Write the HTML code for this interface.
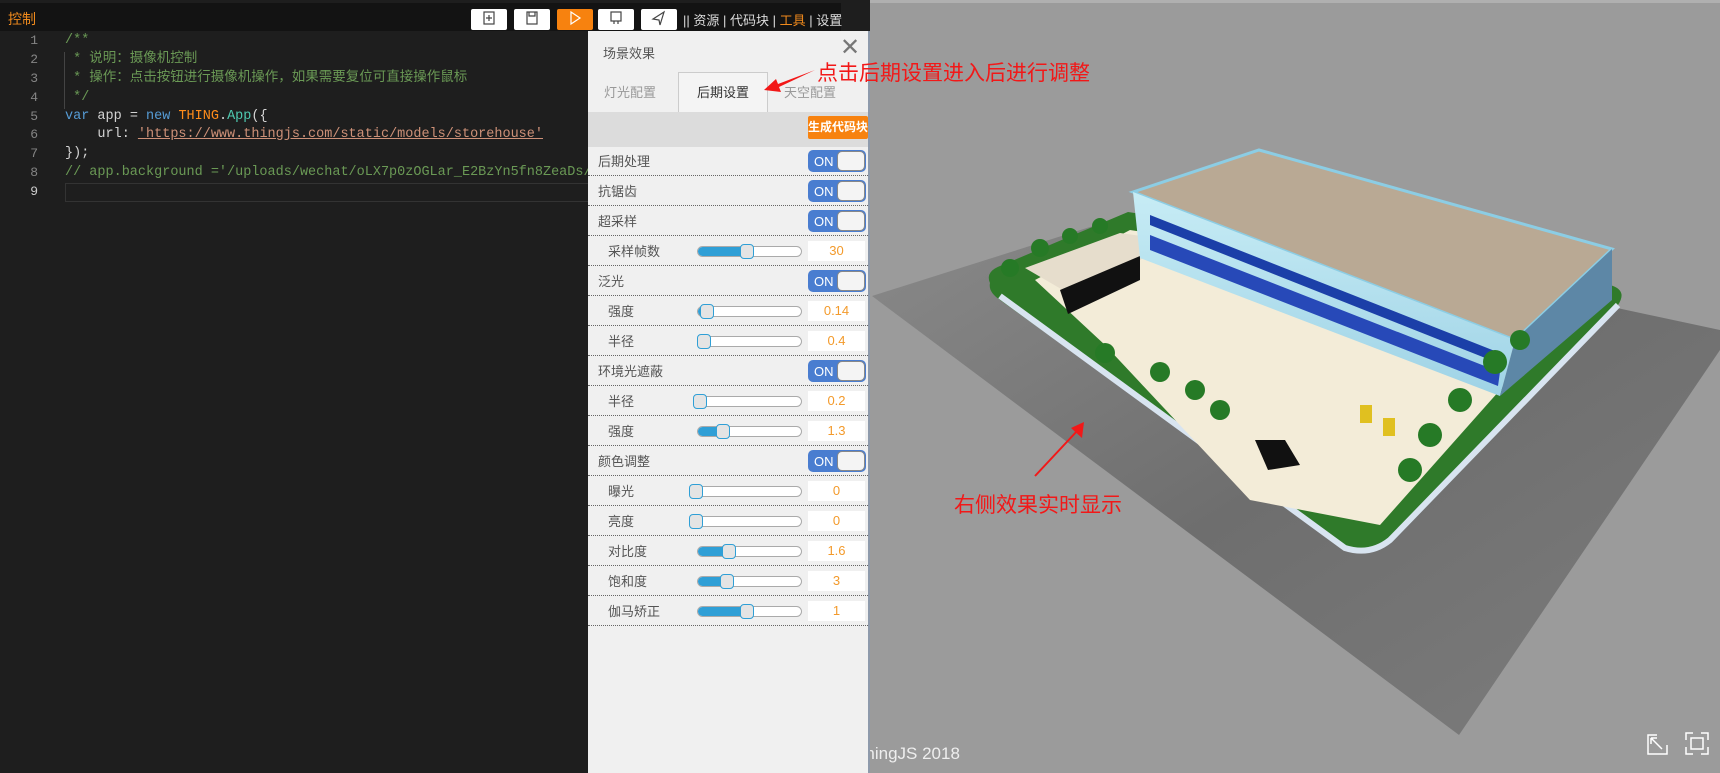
<!DOCTYPE html>
<html><head><meta charset="utf-8">
<style>
*{margin:0;padding:0;box-sizing:border-box}
body{width:1720px;height:773px;overflow:hidden;background:#9a9a9a;font-family:"Liberation Sans","Noto Sans CJK SC",sans-serif;position:relative}
#view{position:absolute;left:0;top:0;width:1720px;height:773px;background:#9b9b9b}
#topstrip{position:absolute;left:0;top:0;width:1720px;height:3px;background:#b0b0b0}
#editor{position:absolute;left:0;top:0;width:870px;height:773px;background:#1e1e1e}
#bar{position:absolute;left:0;top:3px;width:841px;height:28px;background:#131313}
#bar .t{position:absolute;left:8px;top:6px;color:#f08a1c;font-size:14px}
.btn{position:absolute;top:6px;width:36px;height:21px;background:#fff;border-radius:2px}
.btn.o{background:#f7820f}
#menu{position:absolute;left:683px;top:7px;color:#ddd;font-size:13px;white-space:nowrap}
#menu b{color:#f08a1c;font-weight:normal}
.ln{position:absolute;left:0;width:38px;text-align:right;color:#858585;font:13px "Liberation Mono",monospace}
.code{position:absolute;left:65px;color:#d4d4d4;font:13.5px "Liberation Mono","Noto Sans CJK SC",monospace;white-space:pre;line-height:18px}
.cm{color:#6a9955}.kw{color:#569cd6}.th{color:#ff8c1a}.ap{color:#4ec9b0}.st{color:#ce9178;text-decoration:underline}
#panel{position:absolute;left:588px;top:31px;width:282px;height:742px;background:#f0f0f0;border-right:2px solid #8e9aab}
.row{position:absolute;left:0;width:280px;height:30px;border-bottom:1px dotted #666}
.row .l{position:absolute;left:10px;top:5px;font-size:13px;color:#555}
.row .l.s{left:20px}
.tg{position:absolute;left:220px;top:4px;width:58px;height:22px;background:#4a7dd0;border-radius:5px}
.tg span{position:absolute;left:6px;top:4px;color:#fff;font-size:13px}
.tg i{position:absolute;right:1px;top:1px;width:28px;height:20px;background:#f4f4f4;border:1px solid #888;border-radius:5px}
.tr{position:absolute;top:10px;height:11px;background:#fff;border:1px solid #aaa;border-radius:6px;overflow:hidden}
.tr .f{position:absolute;left:0;top:0;height:100%;background:#2f9fd6}
.kn{position:absolute;top:8px;width:14px;height:15px;background:#e4e4e4;border:1px solid #2f9fd6;border-radius:4px}
.vb{position:absolute;left:220px;top:5px;width:57px;height:20px;background:#fff;color:#f39a2b;font-size:13px;text-align:center;line-height:20px}
.ann{position:absolute;color:#f21818;font-size:21px;white-space:nowrap}
</style></head><body>
<div id="view">
<svg width="1720" height="773" style="position:absolute;left:0;top:0">
<defs>
<linearGradient id="g1" x1="0" y1="0" x2="1" y2="1"><stop offset="0" stop-color="#8a8a8a"/><stop offset="0.5" stop-color="#6e6e6e"/><stop offset="1" stop-color="#7d7d7d"/></linearGradient>
<linearGradient id="wall" x1="0" y1="0" x2="0" y2="1"><stop offset="0" stop-color="#c7ecf5"/><stop offset="1" stop-color="#9fd3e6"/></linearGradient>
</defs>
<polygon points="872,296 1150,208 1720,330 1720,350 1459,735" fill="url(#g1)"/>
<path d="M990,283 Q985,272 1000,266 L1128,212 L1610,285 Q1628,290 1618,305 L1390,540 Q1370,556 1345,548 L1000,300 Q988,292 990,283 Z" fill="#2f7a2a"/>
<path d="M1000,296 L1345,548 Q1370,556 1390,540 L1618,305" fill="none" stroke="#d8e4f0" stroke-width="6"/>
<polygon points="1035,280 1130,230 1580,300 1380,525 1250,500 1105,345" fill="#f3ecd8"/>
<polygon points="1025,268 1120,233 1170,240 1080,300" fill="#e6ddcc"/>
<polygon points="1060,290 1140,256 1140,280 1068,314" fill="#111"/>
<polygon points="1255,440 1285,440 1300,465 1268,470" fill="#111"/>
<polygon points="1133,192 1259,150 1612,249 1515,340" fill="#b9a994" stroke="#8ccde4" stroke-width="3"/>
<polygon points="1133,192 1515,340 1500,396 1140,258" fill="url(#wall)"/>
<polygon points="1515,340 1612,249 1612,300 1500,396" fill="#5d87a6"/>
<polygon points="1150,215 1505,355 1503,365 1150,225" fill="#1b3fa8"/>
<polygon points="1150,235 1500,372 1498,386 1150,250" fill="#2749b8"/>
<g fill="#267a26"><circle cx="1010" cy="268" r="9"/><circle cx="1040" cy="248" r="9"/><circle cx="1070" cy="236" r="8"/><circle cx="1100" cy="226" r="8"/><circle cx="1105" cy="353" r="10"/><circle cx="1160" cy="372" r="10"/><circle cx="1195" cy="390" r="10"/><circle cx="1220" cy="410" r="10"/><circle cx="1430" cy="435" r="12"/><circle cx="1460" cy="400" r="12"/><circle cx="1495" cy="362" r="12"/><circle cx="1520" cy="340" r="10"/><circle cx="1410" cy="470" r="12"/></g>
<g fill="#e0c020"><rect x="1360" y="405" width="12" height="18"/><rect x="1383" y="418" width="12" height="18"/></g>
<path d="M1648,738 L1648,754 L1667,754 L1667,745 M1648,747 L1648,735 L1657,735 M1651,738 L1662,749 M1651,738 L1651,744 M1651,738 L1657,738" fill="none" stroke="#fff" stroke-width="1.5"/>
<path d="M1686,740 L1686,733 L1693,733 M1701,733 L1708,733 L1708,740 M1708,747 L1708,754 L1701,754 M1693,754 L1686,754 L1686,747" fill="none" stroke="#fff" stroke-width="1.5"/>
<rect x="1691" y="738" width="12" height="11" fill="none" stroke="#fff" stroke-width="1.5"/>
</svg>
<div style="position:absolute;left:855px;top:744px;color:#eee;font-size:17px">ThingJS 2018</div>
<div id="topstrip"></div>
</div>

<div id="editor">
<div id="bar"><span class="t">控制</span>
<div class="btn" style="left:471px"></div><div class="btn" style="left:514px"></div><div class="btn o" style="left:557px"></div><div class="btn" style="left:598px"></div><div class="btn" style="left:641px"></div>
<svg width="841" height="28" style="position:absolute;left:0;top:0">
<g fill="none" stroke="#444" stroke-width="1.2">
<rect x="484" y="9" width="10" height="12"/><path d="M486,15 h6 M489,12 v6"/>
<rect x="527" y="9" width="10" height="12"/><path d="M529,9 v4 h6 v-4"/>
<path d="M571,9 L580,15 L571,21 Z" stroke="#fff"/>
<rect x="611" y="9" width="10" height="9"/><path d="M614,18 v3 M618,18 v3"/>
<path d="M664,9 L653,16 L659,17 L660,22 Z"/>
</g></svg>
<div id="menu">|| 资源 | 代码块 | <b>工具</b> | 设置</div>
</div>
<div class="ln" style="top:33px">1</div><div class="ln" style="top:52px">2</div><div class="ln" style="top:71px">3</div><div class="ln" style="top:90px">4</div><div class="ln" style="top:109px">5</div><div class="ln" style="top:127px">6</div><div class="ln" style="top:146px">7</div><div class="ln" style="top:165px">8</div><div class="ln" style="top:184px;color:#ccc">9</div>
<div style="position:absolute;left:64px;top:52px;width:1px;height:57px;background:#444"></div>
<div style="position:absolute;left:65px;top:183px;width:540px;height:19px;border:1px solid #333"></div>
<div class="code" style="top:32px"><span class="cm">/**</span></div>
<div class="code" style="top:51px"><span class="cm"> * 说明：摄像机控制</span></div>
<div class="code" style="top:70px"><span class="cm"> * 操作：点击按钮进行摄像机操作，如果需要复位可直接操作鼠标</span></div>
<div class="code" style="top:89px"><span class="cm"> */</span></div>
<div class="code" style="top:108px"><span class="kw">var</span> app = <span class="kw">new</span> <span class="th">THING</span>.<span class="ap">App</span>({</div>
<div class="code" style="top:126px">    url: <span class="st">'https://www.thingjs.com/static/models/storehouse'</span></div>
<div class="code" style="top:145px">});</div>
<div class="code" style="top:164px"><span class="cm">// app.background ='/uploads/wechat/oLX7p0zOGLar_E2BzYn5fn8ZeaDs/file</span></div>
</div>

<div id="panel">
<div style="position:absolute;left:15px;top:12px;font-size:13px;color:#555">场景效果</div>
<div style="position:absolute;left:252px;top:2px;font-size:24px;color:#777">✕</div>
<div style="position:absolute;left:0;top:81px;width:269px;height:1px;background:#ccc"></div>
<div style="position:absolute;left:16px;top:51px;font-size:13px;color:#999">灯光配置</div>
<div style="position:absolute;left:90px;top:41px;width:90px;height:41px;background:#f4f4f4;border:1px solid #ccc;border-bottom:none;font-size:13px;color:#333;text-align:center;line-height:40px">后期设置</div>
<div style="position:absolute;left:196px;top:51px;font-size:13px;color:#999">天空配置</div>
<div style="position:absolute;left:0;top:81px;width:280px;height:35px;background:#dcdcdc"></div>
<div style="position:absolute;left:220px;top:85px;width:60px;height:23px;background:#f7820f;color:#fff;font-size:12px;font-weight:bold;text-align:center;line-height:23px;border-radius:2px">生成代码块</div>

<div class="row" style="top:115px"><span class="l">后期处理</span><div class="tg"><span>ON</span><i></i></div></div>
<div class="row" style="top:145px"><span class="l">抗锯齿</span><div class="tg"><span>ON</span><i></i></div></div>
<div class="row" style="top:175px"><span class="l">超采样</span><div class="tg"><span>ON</span><i></i></div></div>
<div class="row" style="top:205px"><span class="l s">采样帧数</span><div class="tr" style="left:109px;width:105px"><div class="f" style="width:50px"></div></div><div class="kn" style="left:152px"></div><div class="vb">30</div></div>
<div class="row" style="top:235px"><span class="l">泛光</span><div class="tg"><span>ON</span><i></i></div></div>
<div class="row" style="top:265px"><span class="l s">强度</span><div class="tr" style="left:109px;width:105px"><div class="f" style="width:10px"></div></div><div class="kn" style="left:112px"></div><div class="vb">0.14</div></div>
<div class="row" style="top:295px"><span class="l s">半径</span><div class="tr" style="left:109px;width:105px"></div><div class="kn" style="left:109px"></div><div class="vb">0.4</div></div>
<div class="row" style="top:325px"><span class="l">环境光遮蔽</span><div class="tg"><span>ON</span><i></i></div></div>
<div class="row" style="top:355px"><span class="l s">半径</span><div class="tr" style="left:105px;width:109px"></div><div class="kn" style="left:105px"></div><div class="vb">0.2</div></div>
<div class="row" style="top:385px"><span class="l s">强度</span><div class="tr" style="left:109px;width:105px"><div class="f" style="width:25px"></div></div><div class="kn" style="left:128px"></div><div class="vb">1.3</div></div>
<div class="row" style="top:415px"><span class="l">颜色调整</span><div class="tg"><span>ON</span><i></i></div></div>
<div class="row" style="top:445px"><span class="l s">曝光</span><div class="tr" style="left:101px;width:113px"></div><div class="kn" style="left:101px"></div><div class="vb">0</div></div>
<div class="row" style="top:475px"><span class="l s">亮度</span><div class="tr" style="left:101px;width:113px"></div><div class="kn" style="left:101px"></div><div class="vb">0</div></div>
<div class="row" style="top:505px"><span class="l s">对比度</span><div class="tr" style="left:109px;width:105px"><div class="f" style="width:32px"></div></div><div class="kn" style="left:134px"></div><div class="vb">1.6</div></div>
<div class="row" style="top:535px"><span class="l s">饱和度</span><div class="tr" style="left:109px;width:105px"><div class="f" style="width:30px"></div></div><div class="kn" style="left:132px"></div><div class="vb">3</div></div>
<div class="row" style="top:565px"><span class="l s">伽马矫正</span><div class="tr" style="left:109px;width:105px"><div class="f" style="width:50px"></div></div><div class="kn" style="left:152px"></div><div class="vb">1</div></div>
</div>

<div class="ann" style="left:817px;top:57px">点击后期设置进入后进行调整</div>
<div class="ann" style="left:954px;top:489px">右侧效果实时显示</div>
<svg width="1720" height="773" style="position:absolute;left:0;top:0;pointer-events:none">
<path d="M815,70 L778,84 L776,79 L764,90 L781,92 L779,87 Z" fill="#f21818"/>
<line x1="1035" y1="476" x2="1078" y2="430" stroke="#f21818" stroke-width="2"/><polygon points="1084,422 1071,428 1082,438" fill="#f21818"/>
</svg>
</body></html>
